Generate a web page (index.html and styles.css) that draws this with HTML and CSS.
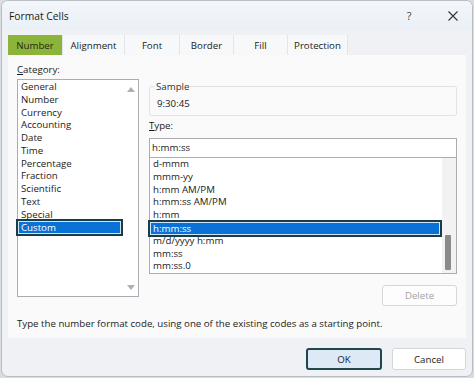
FILE: index.html
```html
<!DOCTYPE html>
<html lang="en">
<head>
    <meta charset="UTF-8">
    <title>Format Cells</title>
    <link rel="stylesheet" href="styles.css">
</head>
<body>
    <div class="dialog">
        <div class="titlebar">
            <span class="title">Format Cells</span>
            <span class="help">?</span>
            <span class="close">
                <svg width="10" height="10" viewBox="0 0 10 10"><path d="M0.5 0.5 L9.5 9.5 M9.5 0.5 L0.5 9.5" stroke="#333" stroke-width="1.1" fill="none"/></svg>
            </span>
        </div>

        <div class="tabs">
            <div class="tab active t-number">Number</div>
            <div class="tab t-align">Alignment</div>
            <div class="tab t-font">Font</div>
            <div class="tab t-border">Border</div>
            <div class="tab t-fill">Fill</div>
            <div class="tab t-protect">Protection</div>
        </div>

        <div class="panel">
            <div class="columns">
                <div class="left">
                    <div class="label"><u>C</u>ategory:</div>
                    <div class="listbox category">
                        <ul class="items">
                            <li>General</li>
                            <li>Number</li>
                            <li>Currency</li>
                            <li>Accounting</li>
                            <li>Date</li>
                            <li>Time</li>
                            <li>Percentage</li>
                            <li>Fraction</li>
                            <li>Scientific</li>
                            <li>Text</li>
                            <li>Special</li>
                            <li class="selected">Custom</li>
                        </ul>
                        <div class="arrows">
                            <span class="arrow up"></span>
                            <span class="arrow down"></span>
                        </div>
                    </div>
                </div>

                <div class="right">
                    <fieldset class="sample">
                        <legend>Sample</legend>
                        <div class="sample-value">9:30:45</div>
                    </fieldset>
                    <div class="label type-label"><u>T</u>ype:</div>
                    <div class="type-input">h:mm:ss</div>
                    <div class="listbox types">
                        <ul class="items">
                            <li>d-mmm</li>
                            <li>mmm-yy</li>
                            <li>h:mm AM/PM</li>
                            <li>h:mm:ss AM/PM</li>
                            <li>h:mm</li>
                            <li class="selected">h:mm:ss</li>
                            <li>m/d/yyyy h:mm</li>
                            <li>mm:ss</li>
                            <li>mm:ss.0</li>
                        </ul>
                        <div class="vscroll"><div class="thumb"></div></div>
                    </div>
                    <div class="delete-row">
                        <button class="btn delete" disabled>Delete</button>
                    </div>
                </div>
            </div>
            <p class="hint">Type the number format code, using one of the existing codes as a starting point.</p>
        </div>

        <div class="footer">
            <button class="btn ok">OK</button>
            <button class="btn cancel">Cancel</button>
        </div>
    </div>
</body>
</html>
```

FILE: styles.css
```css
* {
    box-sizing: border-box;
}

body {
    margin: 0;
    width: 474px;
    height: 378px;
    background: #d9dde2;
    font-family: 'Open Sans', 'Noto Sans', sans-serif;
    font-size: 9.7px;
    color: #1b1b1b;
    overflow: hidden;
}

.dialog {
    width: 472px;
    height: 377px;
    margin-left: 1px;
    background: #eff1f4;
    border: 1px solid #b9bec5;
    border-radius: 7px;
    overflow: hidden;
}

.titlebar {
    height: 29px;
    display: flex;
    align-items: center;
    padding: 0 9px 0 7px;
    background: linear-gradient(#f3f6fa, #eaf0f6);
}

.title {
    font-size: 10.3px;
    flex: 1;
}

.help {
    font-size: 11px;
    color: #444;
    width: 12px;
    text-align: center;
    margin-right: 28px;
}

.close {
    width: 20px;
    display: flex;
    justify-content: center;
}

/* tabs */
.tabs {
    display: flex;
    height: 20px;
    margin: 5px 0 0 6px;
}

.tab {
    display: flex;
    align-items: center;
    justify-content: center;
    background: #f7f8f9;
    border-right: 1px solid #e3e5e8;
    color: #222;
}

.tab.active {
    background: #8db43a;
    color: #1e2a10;
}

.t-number { width: 55px; }
.t-align { width: 62px; }
.t-font { width: 55px; }
.t-border { width: 54px; }
.t-fill { width: 54px; }
.t-protect { width: 60px; }

/* panel */
.panel {
    margin: 0 6px;
    height: 283px;
    background: #fafafa;
    padding: 8px 9px 0 9px;
}

.columns {
    display: flex;
    gap: 10px;
}

.left {
    width: 122px;
}

.right {
    flex: 1;
}

.label {
    height: 13px;
    line-height: 13px;
    margin-bottom: 3px;
}

.listbox {
    background: #fff;
    border: 1px solid #a9adb3;
    display: flex;
}

.items {
    list-style: none;
    margin: 0;
    padding: 0;
    flex: 1;
}

.items li {
    height: 12.75px;
    line-height: 12.75px;
    padding-left: 3px;
    white-space: nowrap;
}

.items li.selected {
    background: #0a72d6;
    color: #fff;
    border: 2px solid #183c48;
    box-shadow: inset 0 0 0 1px #cfe6f8;
    height: 17px;
    line-height: 13px;
    margin: -2px 0 -2px -2px;
    padding-left: 3px;
}

.category {
    height: 218px;
    padding-top: 1px;
}

.category .arrows {
    width: 15px;
    display: flex;
    flex-direction: column;
    justify-content: space-between;
    align-items: center;
    padding: 6px 0 6px;
}

.arrow {
    width: 0;
    height: 0;
    border-left: 4px solid transparent;
    border-right: 4px solid transparent;
}

.arrow.up {
    border-bottom: 5px solid #b0b0b0;
}

.arrow.down {
    border-top: 5px solid #b0b0b0;
}

.sample {
    margin: 17px 0 0;
    height: 36px;
    padding: 0 0 0 7px;
    border: 1px solid #e1e3e6;
    border-radius: 2px;
}

.sample legend {
    padding: 0 1px;
    margin-left: -2px;
    color: #333;
}

.sample-value {
    padding-top: 4px;
}

.type-label {
    margin-top: 3px;
    height: 14px;
    margin-bottom: 5px;
}

.type-input {
    height: 20px;
    line-height: 18px;
    padding-left: 2px;
    background: #fff;
    border: 1px solid #a9adb3;
}

.types {
    height: 116px;
    border-top: none;
    padding-top: 0;
}

.types .items li.selected {
    margin-right: 0;
}

.vscroll {
    width: 14px;
    padding: 77px 4px 0 3px;
    background: #f2f2f2;
}

.thumb {
    width: 6px;
    height: 35px;
    background: #8a8a8a;
    border-radius: 1px;
}

.delete-row {
    display: flex;
    justify-content: flex-end;
    margin-top: 11px;
}

.btn {
    font-family: inherit;
    font-size: 9.7px;
    height: 21px;
    background: #fdfdfd;
    border: 1px solid #d3d6da;
    border-radius: 3px;
    color: #1b1b1b;
    padding: 0;
}

.delete {
    width: 75px;
    color: #a2a2a2;
}

.hint {
    margin: 11px 0 0;
    line-height: 13px;
}

.footer {
    display: flex;
    justify-content: flex-end;
    gap: 10px;
    padding: 10px 6px 0 0;
}

.ok {
    width: 76px;
    height: 22px;
    background: #dde9f5;
    border: 2px solid #1e4750;
}

.cancel {
    width: 74px;
    height: 22px;
    background: #fff;
}
```
